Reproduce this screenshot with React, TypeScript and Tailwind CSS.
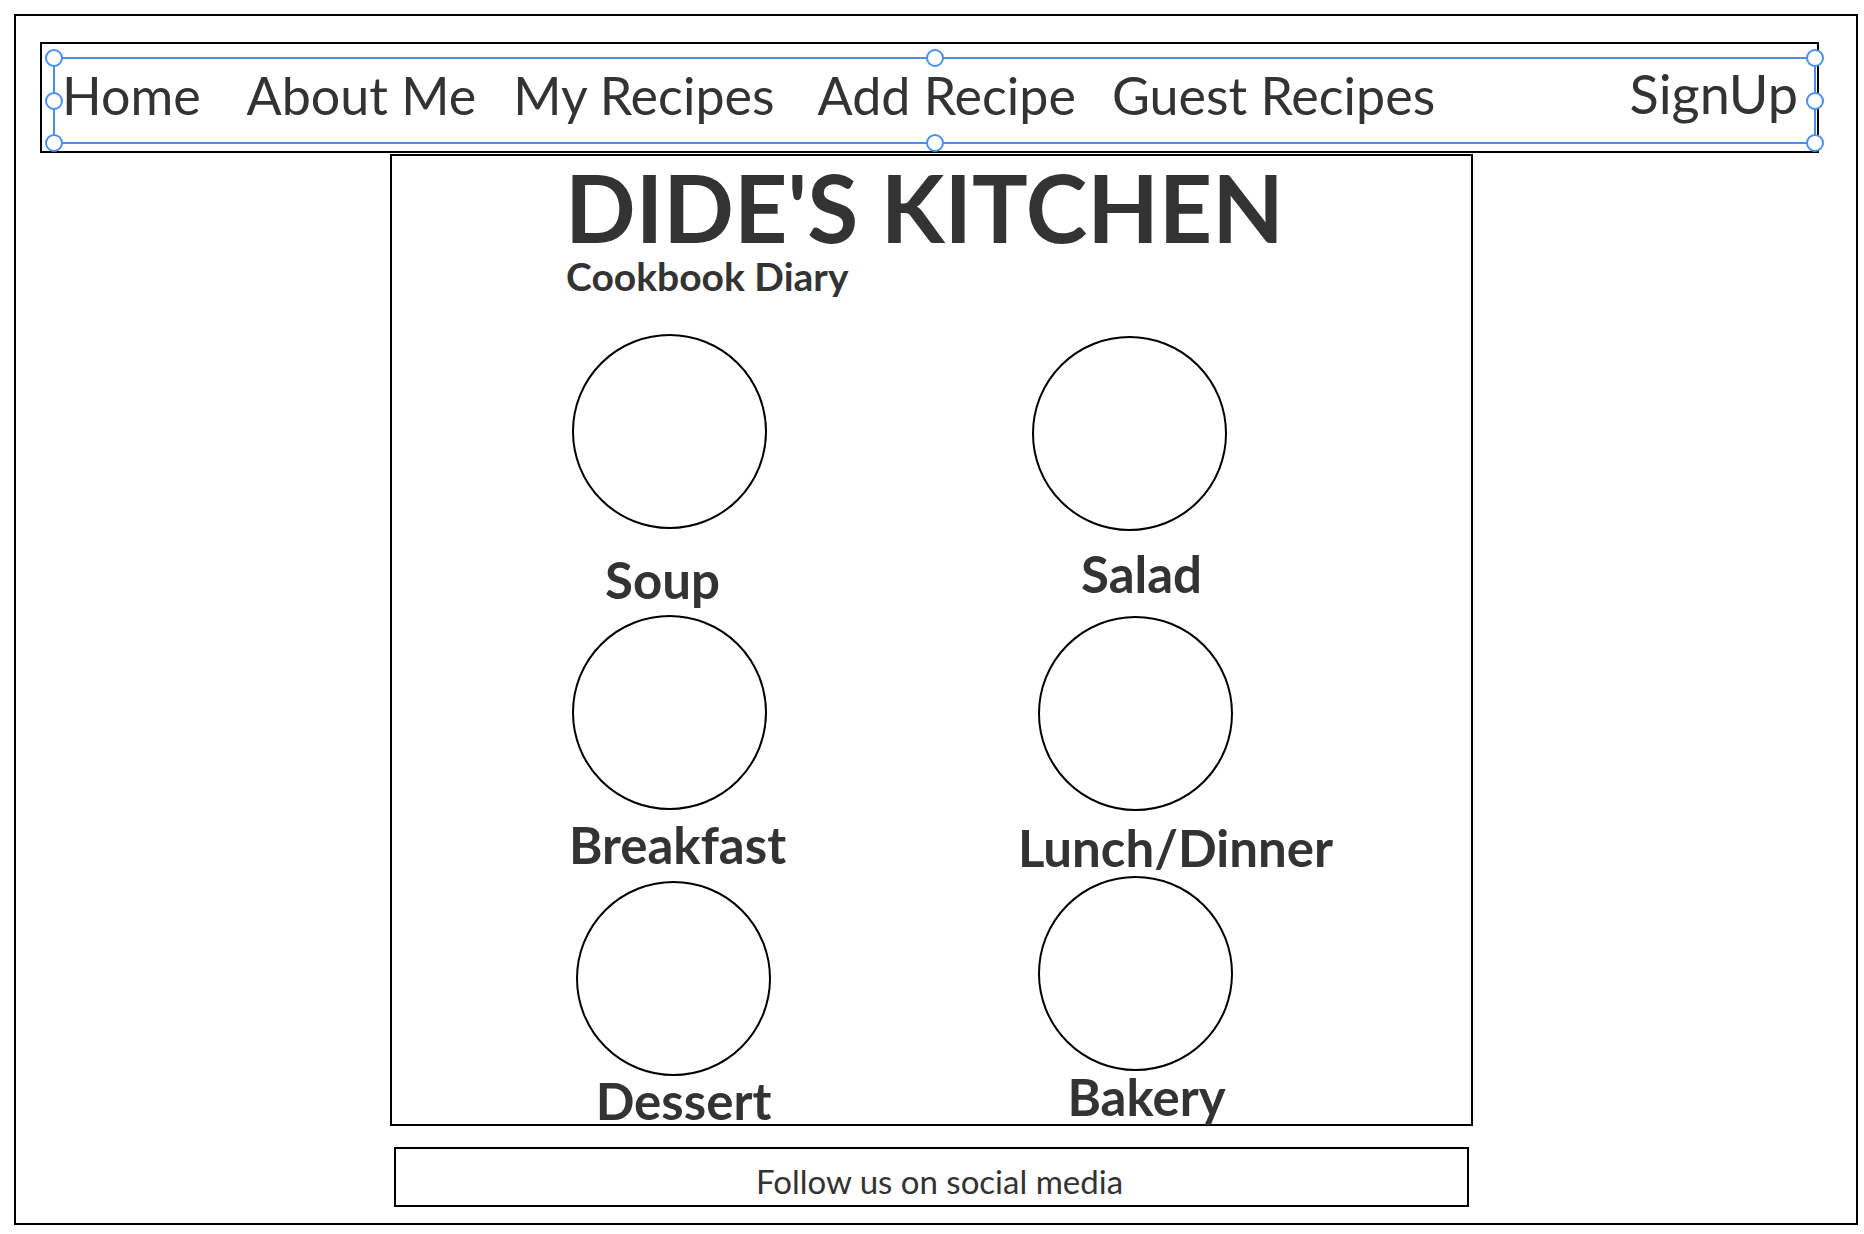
const navItems = [
  { label: "Home", gap: "" },
  { label: "About Me", gap: "ml-[46px]" },
  { label: "My Recipes", gap: "ml-[37px]" },
  { label: "Add Recipe", gap: "ml-[43px]" },
  { label: "Guest Recipes", gap: "ml-[36px]" },
];

function Handle({ className }: { className: string }) {
  return (
    <span
      className={`absolute h-[18px] w-[18px] rounded-full border-2 border-[#4a8ff0] bg-white ${className}`}
    />
  );
}

function Circle({ className = "" }: { className?: string }) {
  return <div className={`h-[195px] w-[195px] rounded-full border-2 border-black ${className}`} />;
}

function Label({ text, className = "" }: { text: string; className?: string }) {
  return (
    <div className={`flex w-[195px] justify-center ${className}`}>
      <span className="whitespace-nowrap text-[51px] font-bold leading-none">{text}</span>
    </div>
  );
}

export default function App() {
  return (
    <div className="min-h-screen bg-white pt-[14px] font-[Lato,sans-serif] text-[#333333]">
      <div className="ml-[14px] h-[1211px] w-[1844px] border-2 border-black">
        {/* nav */}
        <div className="ml-[24px] mt-[26px] h-[111px] w-[1779px] border-2 border-black">
          <div className="relative ml-[11px] mt-[13px] flex h-[87px] w-[1763px] items-start border-2 border-[#4a8ff0] pl-[7px] pr-[16px] pt-[10px]">
            {navItems.map((item) => (
              <span key={item.label} className={`whitespace-nowrap text-[52px] leading-none ${item.gap}`}>
                {item.label}
              </span>
            ))}
            <span className="-mt-[2px] ml-auto whitespace-nowrap text-[54px] leading-none">SignUp</span>

            <Handle className="left-[-10px] top-[-10px]" />
            <Handle className="left-[-10px] top-1/2 -translate-y-1/2" />
            <Handle className="bottom-[-10px] left-[-10px]" />
            <Handle className="right-[-10px] top-[-10px]" />
            <Handle className="right-[-10px] top-1/2 -translate-y-1/2" />
            <Handle className="bottom-[-10px] right-[-10px]" />
            <Handle className="left-1/2 top-[-10px] -translate-x-1/2" />
            <Handle className="bottom-[-10px] left-1/2 -translate-x-1/2" />
          </div>
        </div>

        {/* main card */}
        <div className="ml-[374px] mt-px h-[972px] w-[1083px] border-2 border-black">
          <h1 className="ml-[173px] mt-[5px] whitespace-nowrap text-[93px] font-bold leading-none">
            DIDE'S KITCHEN
          </h1>
          <p className="ml-[174px] mt-[3px] text-[39px] font-bold leading-none">Cookbook Diary</p>

          <div className="mt-[38px] flex pl-[180px]">
            <div className="flex w-[460px] flex-col items-start">
              <Circle />
              <Label text="Soup" className="-ml-[7px] mt-[25px]" />
              <Circle className="mt-[10px]" />
              <Label text="Breakfast" className="ml-[8px] mt-[9px]" />
              <Circle className="ml-[4px] mt-[11px]" />
              <Label text="Dessert" className="-mt-px ml-[14px]" />
            </div>
            <div className="flex flex-col items-start">
              <Circle className="mt-[2px]" />
              <Label text="Salad" className="ml-[12px] mt-[17px]" />
              <Circle className="ml-[6px] mt-[17px]" />
              <Label text="Lunch/Dinner" className="ml-[46px] mt-[11px]" />
              <Circle className="ml-[6px] mt-[3px]" />
              <Label text="Bakery" className="ml-[17px]" />
            </div>
          </div>
        </div>

        {/* footer */}
        <div className="ml-[378px] mt-[21px] flex h-[60px] w-[1075px] justify-center border-2 border-black pl-[16px] pt-[16px]">
          <span className="whitespace-nowrap text-[33px] leading-none">Follow us on social media</span>
        </div>
      </div>
    </div>
  );
}
